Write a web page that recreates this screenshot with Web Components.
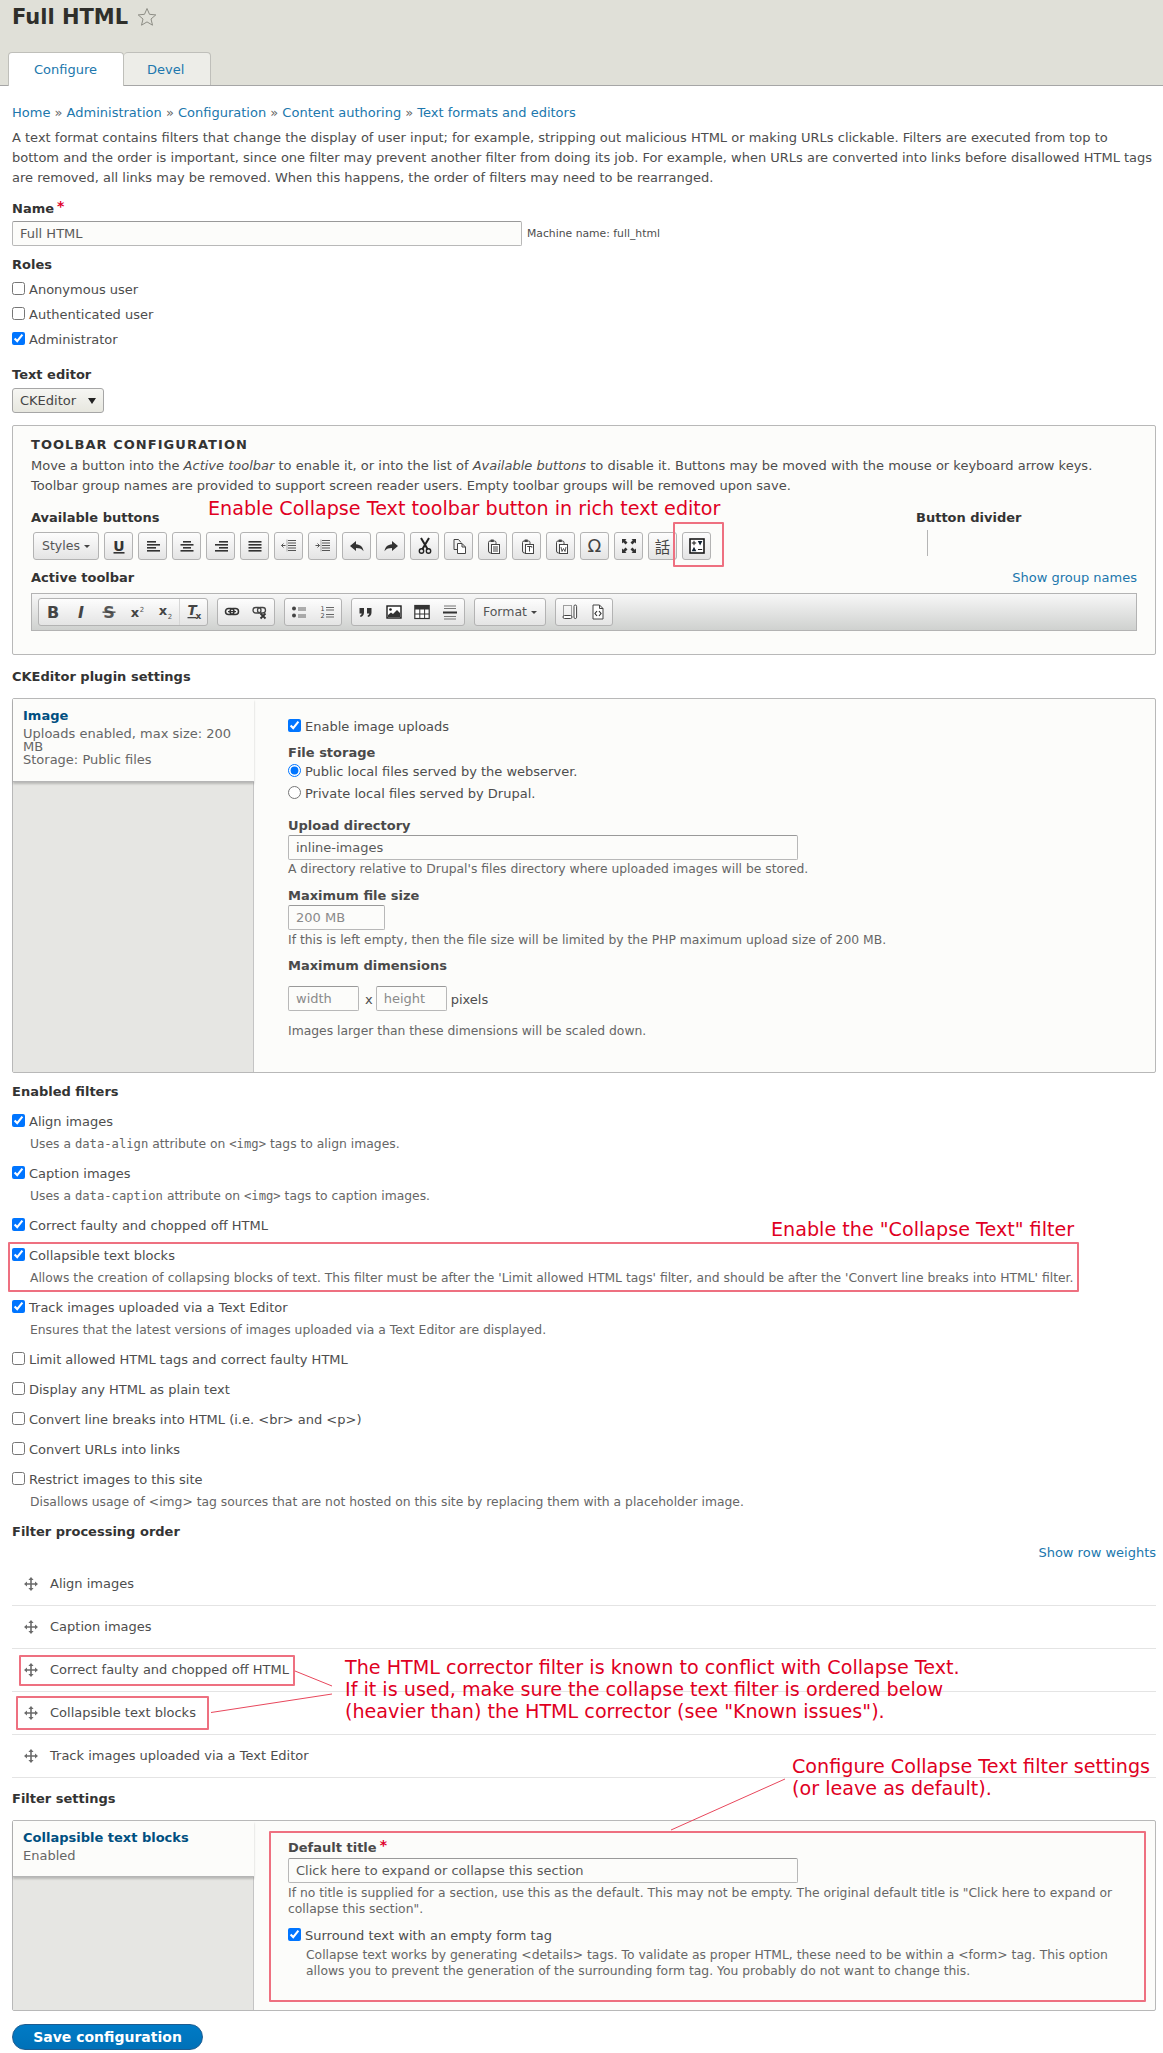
<!DOCTYPE html>
<html lang="en">
<head>
<meta charset="utf-8">
<title>Full HTML</title>
<style>
  html, body { margin: 0; padding: 0; }
  body {
    position: relative;
    font-family: "DejaVu Sans", sans-serif;
    font-size: 13px;
    line-height: 20px;
    color: #4d4d4d;
    background: #fff;
    width: 1163px;
    overflow-x: hidden;
  }
  code { font-family: "DejaVu Sans Mono", monospace; font-size: 12.2px; }
  em { font-style: italic; }
</style>
</head>
<body>

<admin-header heading="Full HTML">
  <admin-tab active>Configure</admin-tab>
  <admin-tab>Devel</admin-tab>
</admin-header>

<page-main>
  <bread-crumbs items="Home|Administration|Configuration|Content authoring|Text formats and editors" style="margin-top:17px"></bread-crumbs>
  <plain-text style="margin-top:5px">A text format contains filters that change the display of user input; for example, stripping out malicious HTML or making URLs clickable. Filters are executed from top to bottom and the order is important, since one filter may prevent another filter from doing its job. For example, when URLs are converted into links before disallowed HTML tags are removed, all links may be removed. When this happens, the order of filters may need to be rearranged.</plain-text>

  <field-label required style="margin-top:10px">Name</field-label>
  <div style="display:flex;align-items:center;margin-top:2px">
    <text-box value="Full HTML" width="510"></text-box>
    <small-note style="margin-left:5px">Machine name: full_html</small-note>
  </div>

  <field-label style="margin-top:9px">Roles</field-label>
  <check-item label="Anonymous user" tight style="margin-top:5px"></check-item>
  <check-item label="Authenticated user" tight></check-item>
  <check-item label="Administrator" checked tight></check-item>

  <field-label style="margin-top:15px">Text editor</field-label>
  <select-box value="CKEditor" style="margin-top:3px"></select-box>

  <toolbar-config style="margin-top:12px">
    <ck-button slot="available" icon="styles" wide="66"></ck-button>
    <ck-button slot="available" icon="underline"></ck-button>
    <ck-button slot="available" icon="alignleft"></ck-button>
    <ck-button slot="available" icon="aligncenter"></ck-button>
    <ck-button slot="available" icon="alignright"></ck-button>
    <ck-button slot="available" icon="alignjustify"></ck-button>
    <ck-button slot="available" icon="outdent"></ck-button>
    <ck-button slot="available" icon="indent"></ck-button>
    <ck-button slot="available" icon="undo"></ck-button>
    <ck-button slot="available" icon="redo"></ck-button>
    <ck-button slot="available" icon="cut"></ck-button>
    <ck-button slot="available" icon="copy"></ck-button>
    <ck-button slot="available" icon="paste"></ck-button>
    <ck-button slot="available" icon="pastetext"></ck-button>
    <ck-button slot="available" icon="pasteword"></ck-button>
    <ck-button slot="available" icon="omega"></ck-button>
    <ck-button slot="available" icon="maximize"></ck-button>
    <ck-button slot="available" icon="language"></ck-button>
    <ck-button slot="available" icon="collapse"></ck-button>

    <ck-group slot="active" icons="bold italic strike sup sub removeformat"></ck-group>
    <ck-group slot="active" icons="link unlink"></ck-group>
    <ck-group slot="active" icons="bullets numbers"></ck-group>
    <ck-group slot="active" icons="quote image table hr"></ck-group>
    <ck-group slot="active" icons="format"></ck-group>
    <ck-group slot="active" icons="blocks source"></ck-group>
  </toolbar-config>

  <field-label style="margin-top:12px">CKEditor plugin settings</field-label>
  <side-tabs heading="Image" summary="Uploads enabled, max size: 200 MB|Storage: Public files" menu="83" style="margin-top:11px;height:375px">
    <div style="padding-top:18px">
      <check-item label="Enable image uploads" checked bare></check-item>
      <field-label small style="margin-top:7px">File storage</field-label>
      <check-item label="Public local files served by the webserver." type="radio" checked bare></check-item>
      <check-item label="Private local files served by Drupal." type="radio" bare style="margin-top:2px"></check-item>
      <field-label small style="margin-top:13px">Upload directory</field-label>
      <text-box value="inline-images" width="510"></text-box>
      <small-note help style="margin-top:1px">A directory relative to Drupal's files directory where uploaded images will be stored.</small-note>
      <field-label small style="margin-top:10px">Maximum file size</field-label>
      <text-box value="200 MB" width="97" muted></text-box>
      <small-note help style="margin-top:2px">If this is left empty, then the file size will be limited by the PHP maximum upload size of 200 MB.</small-note>
      <field-label small style="margin-top:9px">Maximum dimensions</field-label>
      <div style="display:flex;align-items:center;margin-top:11px">
        <text-box value="width" width="71" muted></text-box>
        <span style="margin:2px 3px 0 6px">x</span>
        <text-box value="height" width="71" muted></text-box>
        <span style="margin:2px 0 0 4px">pixels</span>
      </div>
      <small-note help style="margin-top:12px">Images larger than these dimensions will be scaled down.</small-note>
    </div>
  </side-tabs>

  <field-label style="margin-top:9px">Enabled filters</field-label>
  <div style="margin-top:10px">
    <check-item label="Align images" checked>Uses a <code>data-align</code> attribute on <code>&lt;img&gt;</code> tags to align images.</check-item>
    <check-item label="Caption images" checked>Uses a <code>data-caption</code> attribute on <code>&lt;img&gt;</code> tags to caption images.</check-item>
    <check-item label="Correct faulty and chopped off HTML" checked></check-item>
    <check-item label="Collapsible text blocks" checked>Allows the creation of collapsing blocks of text. This filter must be after the 'Limit allowed HTML tags' filter, and should be after the 'Convert line breaks into HTML' filter.</check-item>
    <check-item label="Track images uploaded via a Text Editor" checked>Ensures that the latest versions of images uploaded via a Text Editor are displayed.</check-item>
    <check-item label="Limit allowed HTML tags and correct faulty HTML"></check-item>
    <check-item label="Display any HTML as plain text"></check-item>
    <check-item label="Convert line breaks into HTML (i.e. &lt;br&gt; and &lt;p&gt;)"></check-item>
    <check-item label="Convert URLs into links"></check-item>
    <check-item label="Restrict images to this site">Disallows usage of &lt;img&gt; tag sources that are not hosted on this site by replacing them with a placeholder image.</check-item>
  </div>

  <field-label style="margin-top:10px">Filter processing order</field-label>
  <row-weights style="margin-top:1px"></row-weights>
  <filter-row>Align images</filter-row>
  <filter-row>Caption images</filter-row>
  <filter-row>Correct faulty and chopped off HTML</filter-row>
  <filter-row>Collapsible text blocks</filter-row>
  <filter-row>Track images uploaded via a Text Editor</filter-row>

  <field-label style="margin-top:11px">Filter settings</field-label>
  <side-tabs heading="Collapsible text blocks" summary="Enabled" menu="56" style="margin-top:11px;height:191px">
    <div style="padding-top:17px">
      <field-label small required>Default title</field-label>
      <text-box value="Click here to expand or collapse this section" width="510" style="margin-top:1px"></text-box>
      <small-note help style="margin-top:2px">If no title is supplied for a section, use this as the default. This may not be empty. The original default title is "Click here to expand or collapse this section".</small-note>
      <check-item label="Surround text with an empty form tag" checked bare style="margin-top:9px"></check-item>
      <small-note help style="margin:1px 0 0 18px">Collapse text works by generating &lt;details&gt; tags. To validate as proper HTML, these need to be within a &lt;form&gt; tag. This option allows you to prevent the generation of the surrounding form tag. You probably do not want to change this.</small-note>
    </div>
  </side-tabs>

  <save-button style="margin-top:13px">Save configuration</save-button>
</page-main>

<note-layer>
  <note-box x="673" y="522" w="51" h="45"></note-box>
  <note-box x="8" y="1242" w="1071" h="50"></note-box>
  <note-box x="19" y="1655" w="276" h="31"></note-box>
  <note-box x="16" y="1696" w="193" h="34"></note-box>
  <note-box x="269" y="1831" w="877" h="171"></note-box>
  <note-text x="208" y="509">Enable Collapse Text toolbar button in rich text editor</note-text>
  <note-text x="771" y="1230">Enable the "Collapse Text" filter</note-text>
  <note-text x="345" y="1668">The HTML corrector filter is known to conflict with Collapse Text.</note-text>
  <note-text x="345" y="1690">If it is used, make sure the collapse text filter is ordered below</note-text>
  <note-text x="345" y="1712">(heavier than) the HTML corrector (see "Known issues").</note-text>
  <note-text x="792" y="1767">Configure Collapse Text filter settings</note-text>
  <note-text x="792" y="1789">(or leave as default).</note-text>
</note-layer>

<script>
const LINK = "#2077ad";
const BORDER = "#b8b8b8";

// bars for the alignment icons: [x, y, width, height]
const bars = (list, fill = "#333") =>
  list.map(([x, y, w, h]) => `<rect x="${x}" y="${y}" width="${w}" height="${h}" fill="${fill}"/>`).join("");

const clip = (inner) => `
  <path d="M3.5 4.5V13q0 2 2 2h1M11 7V4.5q0-1.5-1.5-1.5h-.5M6 3h-1q-1.5 0-1.5 1.5" fill="none" stroke="#444" stroke-width="1"/>
  <rect x="5.5" y="1.5" width="3.4" height="2.6" rx=".6" fill="#444"/>
  <rect x="6.5" y="6.5" width="8" height="9" fill="#fff" stroke="#444"/>${inner}`;

const ICONS = {
  underline: `<text x="8" y="12.5" text-anchor="middle" font-size="14" font-weight="700" fill="#333">U</text><rect x="2.5" y="14" width="11" height="1.6" fill="#333"/>`,
  alignleft: bars([[2,3,9,1.6],[2,6,13,1.6],[2,9,9,1.6],[2,12,13,1.6]]),
  aligncenter: bars([[4,3,8,1.6],[1.5,6,13,1.6],[4,9,8,1.6],[1.5,12,13,1.6]]),
  alignright: bars([[6,3,9,1.6],[2,6,13,1.6],[6,9,9,1.6],[2,12,13,1.6]]),
  alignjustify: bars([[1.5,3,13,1.6],[1.5,6,13,1.6],[1.5,9,13,1.6],[1.5,12,13,1.6]]),
  outdent: bars([[7,2,8,1],[7,4.5,8,1],[7,7,8,1],[7,9.5,8,1],[7,12,8,1]], "#555") + bars([[5.5,1.5,1,12]], "#aaa") + `<path d="M.5 7.5h4M2.5 5.5l-2 2 2 2" fill="none" stroke="#555"/>`,
  indent: bars([[7,2,8,1],[7,4.5,8,1],[7,7,8,1],[7,9.5,8,1],[7,12,8,1]], "#555") + bars([[5.5,1.5,1,12]], "#aaa") + `<path d="M.5 7.5h4M2.5 5.5l2 2-2 2" fill="none" stroke="#555"/>`,
  undo: `<path d="M7 3 1 8l6 5V10c3 0 5.5.6 7.5 3.2C14 9 11.5 6.6 7 6.2Z" fill="#333"/>`,
  redo: `<path d="M9 3l6 5-6 5V10c-3 0-5.5.6-7.5 3.2C2 9 4.5 6.6 9 6.2Z" fill="#333"/>`,
  cut: `<path d="M4 0l6.5 11M12 0 5.5 11" stroke="#222" stroke-width="2" fill="none"/><circle cx="4.5" cy="13" r="2.2" fill="none" stroke="#222" stroke-width="1.4"/><circle cx="11.5" cy="13" r="2.2" fill="none" stroke="#222" stroke-width="1.4"/>`,
  copy: `<path d="M6.5 11.5H3V1.5h4.5L10 4.5" fill="none" stroke="#444"/><path d="M6.5 5.5h4.5l3.5 3.5v6.5h-8Z M11 5.5v3.5h3.5" fill="#fff" stroke="#444"/>`,
  paste: clip(bars([[8,8.5,5,1],[8,10.5,5,1],[8,12.5,5,1]], "#444")),
  pastetext: clip(`<path d="M8.2 8.5h4.6v1.2M10.5 8.5v5" fill="none" stroke="#444" stroke-width="1"/>`),
  pasteword: clip(`<path d="M8 9l1 4.5 1.500-3 1.5 3 1-4.5" fill="none" stroke="#444" stroke-width=".9"/>`),
  maximize: `<path d="M1 1h4.500L4.200 2.300 6.500 4.600 4.600 6.500 2.300 4.200 1 5.500Z M15 1v4.500L13.700 4.200 11.400 6.500 9.500 4.600l2.300-2.300L10.500 1Z M1 15v-4.500l1.300 1.300 2.300-2.300 1.900 1.900-2.300 2.300L5.500 15Z M15 15h-4.500l1.300-1.300-2.300-2.300 1.900-1.900 2.300 2.300L15 10.500Z" fill="#333"/>`,
  collapse: `<rect x="1" y="1" width="14" height="14" fill="#fff" stroke="#1a1a1a" stroke-width="1.6"/><path d="M2.800 5h4.400M5 2.800v4.400M9 11.500h4.200" stroke="#1a1a1a" stroke-width="1" fill="none"/><path d="M8.800 3h4.600l-2.300 4.400ZM2.700 13.200 5 8.800l2.300 4.400Z" fill="#123"/>`,
  bold: `<text x="8" y="13.5" text-anchor="middle" font-size="16" font-weight="700" fill="#444">B</text>`,
  italic: `<text x="8" y="13.5" text-anchor="middle" font-size="16" font-weight="700" font-style="italic" fill="#444">I</text>`,
  strike: `<text x="8" y="13.5" text-anchor="middle" font-size="16" font-weight="700" fill="#555">S</text><rect x="1.5" y="7.5" width="13" height="1.3" fill="#444"/>`,
  sup: `<text x="6" y="13" text-anchor="middle" font-size="13" font-weight="700" fill="#444">x</text><text x="13" y="7.5" text-anchor="middle" font-size="7" fill="#555">2</text>`,
  sub: `<text x="6" y="11" text-anchor="middle" font-size="13" font-weight="700" fill="#444">x</text><text x="13" y="15" text-anchor="middle" font-size="7" fill="#555">2</text>`,
  removeformat: `<text x="6" y="11" text-anchor="middle" font-size="13.5" font-weight="700" font-style="italic" fill="#444">T</text><rect x="1.5" y="13" width="9" height="1.3" fill="#444"/><text x="12.5" y="14.5" text-anchor="middle" font-size="9" font-weight="700" fill="#444">x</text>`,
  link: `<rect x="1.5" y="4.5" width="8.5" height="6" rx="3" fill="none" stroke="#333" stroke-width="1.5"/><rect x="6" y="4.5" width="8.5" height="6" rx="3" fill="none" stroke="#333" stroke-width="1.5"/><rect x="4" y="7" width="8" height="1.2" fill="#333"/>`,
  unlink: `<rect x="1" y="3.5" width="8" height="5.5" rx="2.7" fill="none" stroke="#444" stroke-width="1.3"/><rect x="5.5" y="3.5" width="8" height="5.5" rx="2.7" fill="none" stroke="#444" stroke-width="1.3"/><path d="M8.500 9.5l5 5M13.5 9.5l-5 5" stroke="#333" stroke-width="1.8"/>`,
  bullets: `<circle cx="3" cy="4.5" r="2" fill="#444"/><circle cx="3" cy="11.5" r="2" fill="#444"/>` + bars([[7,3.5,8,1],[7,5.5,8,1],[7,10.5,8,1],[7,12.5,8,1]], "#666"),
  numbers: `<text x="3.5" y="7" text-anchor="middle" font-size="6.5" fill="#444">1</text><text x="3.5" y="14" text-anchor="middle" font-size="6.5" fill="#444">2</text>` + bars([[7,3,8,1],[7,5.5,8,1],[7,10,8,1],[7,12.5,8,1]], "#666"),
  quote: `<path d="M1.5 4h4.5v4.5c0 2.5-1.500 4-3.500 4.500l-.5-1.300c1-.4 1.600-1.200 1.700-2.200H1.500ZM9 4h4.500v4.500c0 2.500-1.500 4-3.500 4.500l-.5-1.300c1-.4 1.600-1.200 1.700-2.200H9Z" fill="#333"/>`,
  image: `<rect x="1" y="2" width="14" height="12" fill="#fff" stroke="#1a1a1a" stroke-width="1.4"/><circle cx="4.5" cy="5.5" r="1.3" fill="#1a1a1a"/><path d="M2 13V11l3-2.500 2 1.500 4-4 3 3v4Z" fill="#333"/>`,
  table: `<rect x=".8" y="1.5" width="14.4" height="13" fill="#fff" stroke="#333" stroke-width="1.2"/><rect x="1" y="1.5" width="14" height="4" fill="#333"/><path d="M5.800 5v9M10.600 5v9M1 10h14" stroke="#333" fill="none"/>`,
  hr: bars([[2,1.5,12,1],[2,4,12,1],[2,12,12,1],[2,14.5,12,1]], "#777") + bars([[1,7.5,14,2]], "#333"),
  blocks: `<path d="M1.500 1.500h8v11h-8Z" fill="none" stroke="#444" stroke-dasharray="1 1"/><rect x="1" y="11.5" width="9" height="3" rx="1.5" fill="#fff" stroke="#444"/><rect x="12" y="1" width="2.6" height="13.5" rx="1.3" fill="#fff" stroke="#444"/>`,
  source: `<path d="M3 1h6.500L13 4.500V15H3Z M9.500 1v3.500H13" fill="#fff" stroke="#444"/><path d="M7 7 5 9.500 7 12M9 7l2 2.500L9 12" fill="none" stroke="#333" stroke-width="1.2"/>`,
};

const DROPDOWNS = { styles: "Styles", format: "Format" };

// these two are plain glyphs in the toolbar, not drawn shapes
const GLYPHS = {
  omega: `<span class="glyph omega">Ω</span>`,
  language: `<span class="glyph lang">話</span>`,
};

const BUTTON_CSS = `
  svg { overflow: visible; }
  .drop { color: #555; font-size: 12.5px; display: flex; align-items: center; }
  .drop i { margin-left: 4px; border: 3px solid transparent; border-top: 3px solid #444; border-bottom: 0; }
  .glyph { display: block; line-height: 24px; color: #444; }
  .omega { font-size: 18px; }
  .lang { font-size: 15.5px; font-family: "Noto Sans CJK TC", sans-serif; }
`;

function buttonContent(name) {
  if (DROPDOWNS[name]) {
    return `<span class="drop">${DROPDOWNS[name]}<i></i></span>`;
  }
  if (GLYPHS[name]) {
    return GLYPHS[name];
  }
  return `<svg width="16" height="16" viewBox="0 0 16 16" aria-hidden="true">${ICONS[name] || ""}</svg>`;
}

class Shadowed extends HTMLElement {
  constructor() {
    super();
    this.attachShadow({ mode: "open" });
  }

  connectedCallback() {
    this.render();
  }

  get style() {
    return "";
  }

  get template() {
    return "<slot></slot>";
  }

  render() {
    this.shadowRoot.innerHTML = `<style>${this.style}</style>${this.template}`;
  }
}

class AdminHeader extends Shadowed {
  get style() {
    return `
      :host { display: block; height: 85px; background: #e0e0d8; border-bottom: 1px solid #a6a6a6; position: relative; }
      h1 { margin: 0; padding: 2px 0 0 12px; height: 52px; box-sizing: border-box; font-size: 21px; line-height: 30px; font-weight: 700; color: #2f2f2b; display: flex; align-items: flex-start; }
      svg { margin: 5px 0 0 9px; }
      nav { display: flex; padding-left: 8px; height: 33px; }
    `;
  }

  get template() {
    return `
      <h1>${this.getAttribute("heading")}
        <svg width="20" height="20" viewBox="0 0 20 20"><path d="M10 1.500l2.500 5.800 6.300.6-4.800 4.100 1.500 6.200L10 14.900l-5.500 3.300L6 12 1.200 7.900l6.300-.6Z" fill="none" stroke="#8d8d85" stroke-width="1"/></svg>
      </h1>
      <nav><slot></slot></nav>
    `;
  }
}

class AdminTab extends Shadowed {
  get style() {
    const active = this.hasAttribute("active");
    return `
      :host {
        display: block;
        box-sizing: border-box;
        height: ${active ? 34 : 33}px;
        padding: 0 26px 0 25px;
        line-height: 34px;
        color: ${LINK};
        background: ${active ? "#fff" : "#edede8"};
        border: 1px solid #bfbfba;
        border-bottom: 0;
        ${active ? "" : "border-left: 0; padding-left: 23px;"}
        border-radius: 4px 4px 0 0;
        position: relative;
      }
    `;
  }
}

class PageMain extends Shadowed {
  get style() {
    return `:host { display: block; padding: 0 7px 3px 12px; }`;
  }
}

class BreadCrumbs extends Shadowed {
  get style() {
    return `
      :host { display: block; color: #666; }
      a { color: ${LINK}; text-decoration: none; }
    `;
  }

  get template() {
    return this.getAttribute("items").split("|").map((item) => `<a href="#">${item}</a>`).join(" » ");
  }
}

class PlainText extends Shadowed {
  get style() {
    return `:host { display: block; color: #4d4d4d; }`;
  }
}

class FieldLabel extends Shadowed {
  get style() {
    const small = this.hasAttribute("small");
    return `
      :host { display: block; font-weight: 700; color: ${small ? "#4a4a4a" : "#333"}; line-height: ${small ? 18 : 20}px; }
      b { color: #e0002b; font-size: 14px; position: relative; top: -2px; margin-left: 3px; }
    `;
  }

  get template() {
    return `<slot></slot>${this.hasAttribute("required") ? "<b>*</b>" : ""}`;
  }
}

class TextBox extends Shadowed {
  get style() {
    return `
      :host {
        display: block;
        box-sizing: border-box;
        width: ${this.getAttribute("width")}px;
        height: 25px;
        padding: 0 7px;
        line-height: 23px;
        border: 1px solid #b8b8b8;
        border-top-color: #999;
        border-radius: 2px;
        background: #fcfcfa;
        color: ${this.hasAttribute("muted") ? "#8a8a8a" : "#595959"};
        white-space: nowrap;
        overflow: hidden;
        flex: none;
      }
    `;
  }

  get template() {
    return this.getAttribute("value");
  }
}

class SmallNote extends Shadowed {
  get style() {
    return this.hasAttribute("help")
      ? `:host { display: block; font-size: 12.35px; line-height: 16px; color: #666; }`
      : `:host { display: block; font-size: 10.8px; color: #4d4d4d; }`;
  }
}

class CheckItem extends Shadowed {
  get style() {
    const bare = this.hasAttribute("bare");
    const tight = this.hasAttribute("tight");
    return `
      :host { display: block; margin-bottom: ${bare ? 0 : tight ? 5 : 10}px; }
      label { display: flex; align-items: flex-start; height: 20px; color: #4d4d4d; }
      input { margin: 2px 4px 0 0; width: 13px; height: 13px; flex: none; }
      .desc { display: block; margin: 2px 0 0 18px; font-size: 12.35px; line-height: 20px; color: #666; }
      .desc.empty { display: none; }
    `;
  }

  get template() {
    const type = this.getAttribute("type") || "checkbox";
    const checked = this.hasAttribute("checked") ? "checked" : "";
    const empty = this.textContent.trim() ? "" : "empty";
    return `
      <label><input type="${type}" ${checked}><span></span></label>
      <div class="desc ${empty}"><slot></slot></div>
    `;
  }

  render() {
    super.render();
    this.shadowRoot.querySelector("span").textContent = this.getAttribute("label");
  }
}

class SelectBox extends Shadowed {
  get style() {
    return `
      :host {
        display: flex;
        align-items: center;
        justify-content: space-between;
        box-sizing: border-box;
        width: 92px;
        height: 25px;
        padding: 0 7px;
        border: 1px solid #a6a6a6;
        border-radius: 3px;
        background: linear-gradient(#f6f6f3, #e7e7df);
        color: #444;
      }
      i { border: 4px solid transparent; border-top: 6px solid #222; border-bottom: 0; }
    `;
  }

  get template() {
    return `<span>${this.getAttribute("value")}</span><i></i>`;
  }
}

class CkButton extends Shadowed {
  get style() {
    const wide = this.getAttribute("wide") || 29;
    return `
      :host {
        display: flex;
        align-items: center;
        justify-content: center;
        box-sizing: border-box;
        width: ${wide}px;
        height: 28px;
        border: 1px solid #b3b3b3;
        border-radius: 3px;
        background: linear-gradient(#fdfdfd, #e4e4e4);
        flex: none;
      }
      ${BUTTON_CSS}
    `;
  }

  get template() {
    return buttonContent(this.getAttribute("icon"));
  }
}

class CkGroup extends Shadowed {
  get style() {
    return `
      :host {
        display: flex;
        box-sizing: border-box;
        height: 28px;
        margin-right: 9px;
        border: 1px solid #b3b3b3;
        border-radius: 3px;
        background: linear-gradient(#fdfdfd, #e4e4e4);
        flex: none;
      }
      span.cell { display: flex; align-items: center; justify-content: center; width: 28px; }
      span.format { width: 70px; }
      span.sep { border-left: 1px solid #d6d6d6; box-sizing: border-box; }
      ${BUTTON_CSS}
    `;
  }

  get template() {
    return this.getAttribute("icons").split(" ").map((name) => {
      const cls = name === "format" ? "format" : name === "removeformat" ? "sep" : "";
      return `<span class="cell ${cls}">${buttonContent(name)}</span>`;
    }).join("");
  }
}

class ToolbarConfig extends Shadowed {
  get style() {
    return `
      :host {
        display: block;
        box-sizing: border-box;
        height: 230px;
        padding: 9px 18px 0;
        background: #fcfcfa;
        border: 1px solid ${BORDER};
        border-radius: 2px;
      }
      h2 { margin: 0; font-size: 13px; line-height: 20px; letter-spacing: 1.05px; color: #333; text-transform: uppercase; }
      p { margin: 1px 0 0; }
      .top { display: flex; margin-top: 12px; height: 52px; }
      .available { width: 885px; }
      .label { font-weight: 700; color: #333; }
      .buttons { display: flex; gap: 5px; margin: 4px 0 0 2px; }
      .divider { height: 26px; width: 0; margin: 2px 0 0 11px; border-left: 1px solid #b5b5b5; }
      .active-head { display: flex; justify-content: space-between; margin-top: 8px; }
      a { color: ${LINK}; text-decoration: none; }
      .bar {
        display: flex;
        box-sizing: border-box;
        height: 38px;
        margin-top: 5px;
        padding: 4px 6px;
        border: 1px solid #b3b3b3;
        background: linear-gradient(#f7f7f7, #cfd1cf);
      }
    `;
  }

  get template() {
    return `
      <h2>Toolbar configuration</h2>
      <p>Move a button into the <em>Active toolbar</em> to enable it, or into the list of <em>Available buttons</em> to disable it. Buttons may be moved with the mouse or keyboard arrow keys.<br>Toolbar group names are provided to support screen reader users. Empty toolbar groups will be removed upon save.</p>
      <div class="top">
        <div class="available">
          <div class="label">Available buttons</div>
          <div class="buttons"><slot name="available"></slot></div>
        </div>
        <div>
          <div class="label">Button divider</div>
          <div class="divider"></div>
        </div>
      </div>
      <div class="active-head"><span class="label">Active toolbar</span><a href="#">Show group names</a></div>
      <div class="bar"><slot name="active"></slot></div>
    `;
  }
}

class SideTabs extends Shadowed {
  get style() {
    return `
      :host {
        display: flex;
        box-sizing: border-box;
        background: #fcfcfa;
        border: 1px solid ${BORDER};
        border-radius: 2px;
      }
      .menu { flex: none; width: 241px; box-sizing: border-box; background: #e6e6e3; border-right: 1px solid #c4c4c4; }
      .item {
        box-sizing: border-box;
        height: ${this.getAttribute("menu")}px;
        margin-right: -1px;
        padding: 8px 10px 0 10px;
        background: #fcfcfa;
        border-bottom: 1px solid #b5b5b5;
        box-shadow: 0 2px 2px rgba(0, 0, 0, .2);
        position: relative;
        font-size: 13px;
        line-height: 13px;
        color: #666;
      }
      strong { display: block; color: #004f80; font-size: 13px; line-height: 18px; margin-bottom: 2px; }
      .pane { flex: 1; min-width: 0; padding: 0 14px 0 34px; }
    `;
  }

  get template() {
    const lines = this.getAttribute("summary").split("|").map((line) => `<div>${line}</div>`).join("");
    return `
      <div class="menu"><div class="item"><strong>${this.getAttribute("heading")}</strong>${lines}</div></div>
      <div class="pane"><slot></slot></div>
    `;
  }
}

class RowWeights extends Shadowed {
  get style() {
    return `
      :host { display: block; text-align: right; height: 20px; }
      a { color: ${LINK}; text-decoration: none; }
    `;
  }

  get template() {
    return `<a href="#">Show row weights</a>`;
  }
}

class FilterRow extends Shadowed {
  get style() {
    return `
      :host {
        display: flex;
        align-items: center;
        box-sizing: border-box;
        height: 43px;
        padding: 0 0 1px 12px;
        border-bottom: 1px solid #e4e4e4;
        color: #4d4d4d;
      }
      svg { margin-right: 12px; flex: none; }
    `;
  }

  get template() {
    return `
      <svg width="14" height="14" viewBox="0 0 14 14"><path d="M7 2v10M2 7h10" stroke="#6b6b6b" stroke-width="1.6" fill="none"/><path d="M7 0l2.600 3H4.400ZM7 14l-2.600-3h5.200ZM0 7l3-2.600v5.200ZM14 7l-3 2.600V4.400Z" fill="#6b6b6b"/></svg>
      <slot></slot>
    `;
  }
}

class SaveButton extends Shadowed {
  get style() {
    return `
      :host {
        display: block;
        box-sizing: border-box;
        width: 191px;
        height: 26px;
        line-height: 24px;
        text-align: center;
        font-size: 14px;
        font-weight: 700;
        color: #fff;
        background: linear-gradient(#007bc6, #0071b8);
        border: 1px solid #1e5c90;
        border-radius: 20px;
      }
    `;
  }
}

class NoteLayer extends Shadowed {
  get style() {
    return `:host { position: absolute; left: 0; top: 0; width: 1163px; height: 2053px; pointer-events: none; }
      svg { position: absolute; left: 0; top: 0; }`;
  }

  get template() {
    return `
      <svg width="1163" height="2053">
        <path d="M295 1671 332 1686M211 1712.5 332 1694M785 1779 671 1830" fill="none" stroke="#e8475c" stroke-width="1"/>
      </svg>
      <slot></slot>
    `;
  }
}

class NoteBox extends Shadowed {
  get style() {
    const attr = (name) => this.getAttribute(name);
    return `
      :host {
        position: absolute;
        left: ${attr("x")}px;
        top: ${attr("y")}px;
        width: ${attr("w")}px;
        height: ${attr("h")}px;
        box-sizing: border-box;
        border: 2px solid #ee7080;
        border-radius: 1px;
      }
    `;
  }
}

class NoteText extends Shadowed {
  get style() {
    return `
      :host {
        position: absolute;
        left: ${this.getAttribute("x")}px;
        top: ${this.getAttribute("y") - 12}px;
        font-size: 19.15px;
        line-height: 24px;
        color: #e0001f;
        white-space: nowrap;
      }
    `;
  }
}

customElements.define("admin-header", AdminHeader);
customElements.define("admin-tab", AdminTab);
customElements.define("page-main", PageMain);
customElements.define("bread-crumbs", BreadCrumbs);
customElements.define("plain-text", PlainText);
customElements.define("field-label", FieldLabel);
customElements.define("text-box", TextBox);
customElements.define("small-note", SmallNote);
customElements.define("check-item", CheckItem);
customElements.define("select-box", SelectBox);
customElements.define("ck-button", CkButton);
customElements.define("ck-group", CkGroup);
customElements.define("toolbar-config", ToolbarConfig);
customElements.define("side-tabs", SideTabs);
customElements.define("row-weights", RowWeights);
customElements.define("filter-row", FilterRow);
customElements.define("save-button", SaveButton);
customElements.define("note-layer", NoteLayer);
customElements.define("note-box", NoteBox);
customElements.define("note-text", NoteText);
</script>
</body>
</html>
